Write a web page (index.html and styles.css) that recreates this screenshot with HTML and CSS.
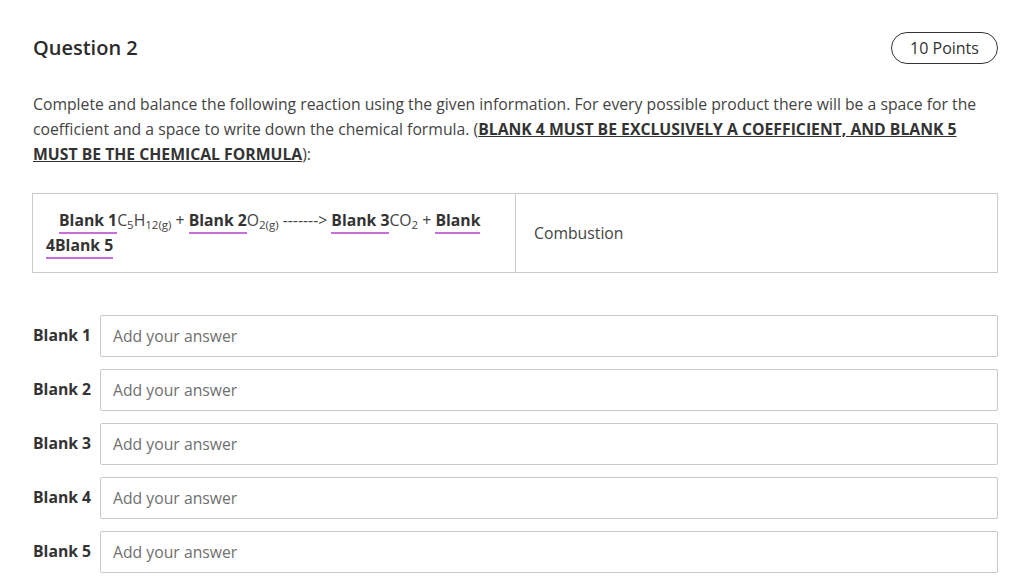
FILE: index.html
```html
<!DOCTYPE html>
<html>
<head>
<meta charset="utf-8">
<link rel="stylesheet" href="styles.css">
</head>
<body>
<div class="page">
  <div class="header">
    <h2 class="title">Question 2</h2>
    <span class="points">10 Points</span>
  </div>
  <p class="prompt">Complete and balance the following reaction using the given information. For every possible product there will be a space for the coefficient and a space to write down the chemical formula. (<b class="ul">BLANK 4 MUST BE EXCLUSIVELY A COEFFICIENT, AND BLANK 5 MUST BE THE CHEMICAL FORMULA</b>):</p>
  <table class="rx">
    <tr>
      <td class="eq"><span class="blank">Blank 1</span>C<sub>5</sub>H<sub>12(g)</sub> + <span class="blank">Blank 2</span>O<sub>2(g)</sub> -------&gt; <span class="blank">Blank 3</span>CO<sub>2</sub> + <span class="blank">Blank 4</span><span class="blank">Blank 5</span></td>
      <td class="type">Combustion</td>
    </tr>
  </table>
  <div class="answers">
    <div class="row"><label class="lbl">Blank 1</label><input class="inp" type="text" placeholder="Add your answer"></div>
    <div class="row"><label class="lbl">Blank 2</label><input class="inp" type="text" placeholder="Add your answer"></div>
    <div class="row"><label class="lbl">Blank 3</label><input class="inp" type="text" placeholder="Add your answer"></div>
    <div class="row"><label class="lbl">Blank 4</label><input class="inp" type="text" placeholder="Add your answer"></div>
    <div class="row"><label class="lbl">Blank 5</label><input class="inp" type="text" placeholder="Add your answer"></div>
  </div>
</div>
</body>
</html>
```

FILE: styles.css
```css
html, body {
  margin: 0;
  padding: 0;
  background: #ffffff;
}
body {
  font-family: "Open Sans", "Noto Sans", sans-serif;
  color: #333333;
  font-size: 15.75px;
}
.page {
  padding: 32px 18px 0 32px;
}
.header {
  display: flex;
  justify-content: space-between;
  align-items: center;
  height: 32px;
}
.title {
  margin: 0;
  font-size: 20px;
  font-weight: 600;
  color: #2b2b2b;
  line-height: 32px;
  padding-left: 1px;
}
.points {
  box-sizing: border-box;
  height: 32px;
  width: 107px;
  border: 1px solid #333333;
  border-radius: 16px;
  font-size: 16px;
  display: flex;
  align-items: center;
  justify-content: center;
  color: #333333;
}
.prompt {
  margin: 28px 0 0 0;
  line-height: 25px;
  padding-left: 1px;
  padding-right: 16px;
  color: #444444;
}
.ul {
  text-decoration: underline;
  font-weight: 700;
  color: #333333;
}
.rx {
  margin-top: 26px;
  width: 100%;
  border-collapse: collapse;
}
.rx td {
  border: 1px solid #cccccc;
  vertical-align: middle;
  line-height: 25px;
}
.eq {
  width: 483px;
  box-sizing: border-box;
  padding: 14px 12px 14px 13px;
  text-indent: 13px;
  color: #444444;
}
.eq sub {
  font-size: 11.5px;
  line-height: 0;
  vertical-align: -3px;
}
.blank {
  font-weight: 700;
  color: #333333;
  border-bottom: 2px solid #c66fd8;
  padding-bottom: 1px;
}
.type {
  padding: 0 18px;
  color: #444444;
}
.answers {
  margin-top: 42px;
  display: flex;
  flex-direction: column;
  gap: 12px;
}
.row {
  display: grid;
  grid-template-columns: 68px 1fr;
  align-items: center;
}
.lbl {
  font-weight: 700;
  color: #333333;
  padding-left: 1px;
  position: relative;
  top: -1px;
}
.inp {
  box-sizing: border-box;
  height: 42px;
  width: 100%;
  margin: 0;
  border: 1px solid #c8c8c8;
  border-radius: 2px;
  padding: 0 12px;
  font-family: "Open Sans", "Noto Sans", sans-serif;
  font-size: 15.75px;
  color: #333333;
  outline: none;
}
.inp::placeholder {
  color: #707070;
  opacity: 1;
}
```
